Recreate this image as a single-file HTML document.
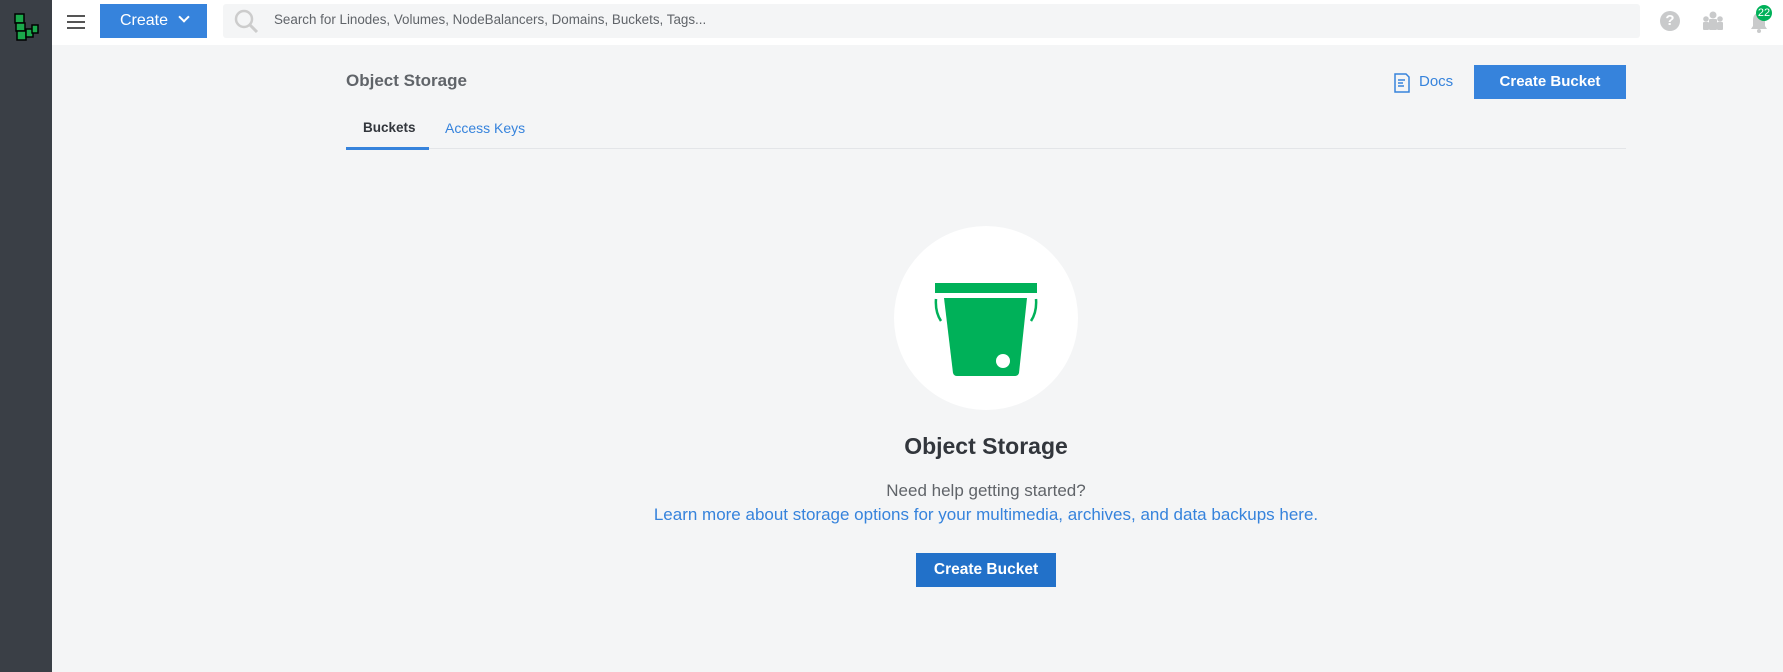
<!DOCTYPE html>
<html><head><style>
*{margin:0;padding:0;box-sizing:border-box}
body{width:1783px;height:672px;background:#f4f5f6;font-family:"Liberation Sans",sans-serif;position:relative;overflow:hidden}
.a{position:absolute}
</style></head><body>
<div class="a" style="left:0;top:0;width:52px;height:672px;background:#3a3f46"></div>
<svg class="a" style="left:12px;top:12px" width="28" height="32" viewBox="0 0 28 32">
<rect x="3" y="2" width="9" height="9" fill="#1ba84b" stroke="#000" stroke-width="1.5"/>
<rect x="4" y="11" width="9" height="8" fill="#1ba84b" stroke="#000" stroke-width="1.5"/>
<rect x="5" y="19" width="9" height="9" fill="#1ba84b" stroke="#000" stroke-width="1.5"/>
<rect x="14" y="17" width="7" height="8" fill="#1ba84b" stroke="#000" stroke-width="1.5"/>
<rect x="20" y="13" width="6" height="8" fill="#1ba84b" stroke="#000" stroke-width="1.5"/>
</svg>
<div class="a" style="left:52px;top:0;width:1731px;height:45px;background:#fff"></div>
<div class="a" style="left:67px;top:15px;width:18px;height:2px;background:#555;box-shadow:0 6px 0 #555,0 12px 0 #555"></div>
<div class="a" style="left:100px;top:4px;width:107px;height:34px;background:#3683dc;color:#fff;font-size:16px;line-height:34px;padding-left:20px">Create <span style="display:inline-block;width:8px;height:8px;border-right:2px solid #fff;border-bottom:2px solid #fff;transform:rotate(45deg);margin:0 0 4px 8px"></span></div>
<div class="a" style="left:223px;top:4px;width:1417px;height:34px;background:#f4f5f6;border-radius:3px"></div>
<svg class="a" style="left:233px;top:8px" width="26" height="26"><circle cx="11" cy="11" r="8" fill="none" stroke="#ccc" stroke-width="2.5"/><path d="M17 17l7 7" stroke="#ccc" stroke-width="3"/></svg>
<div class="a" style="left:274px;top:12px;font-size:13.4px;color:#606469">Search for Linodes, Volumes, NodeBalancers, Domains, Buckets, Tags...</div>
<div class="a" style="left:1660px;top:11px;width:20px;height:20px;border-radius:50%;background:#c9cacb;color:#fff;font-weight:bold;font-size:15px;text-align:center;line-height:20px">?</div>
<svg class="a" style="left:1702px;top:11px" width="22" height="20" fill="#c9cacb"><circle cx="11" cy="4" r="3.5"/><circle cx="4" cy="8" r="2.8"/><circle cx="18" cy="8" r="2.8"/><rect x="7" y="8" width="8" height="11" rx="1"/><rect x="1" y="11" width="6" height="8" rx="1"/><rect x="15" y="11" width="6" height="8" rx="1"/></svg>
<svg class="a" style="left:1748px;top:10px" width="22" height="24" fill="#c9cacb"><path d="M11 3c-4 0-6 3-6 7v6l-2 3h16l-2-3v-6c0-4-2-7-6-7z"/><circle cx="11" cy="21" r="2"/></svg>
<div class="a" style="left:1756px;top:5px;width:16px;height:16px;border-radius:50%;background:#00b159;color:#fff;font-size:11px;text-align:center;line-height:16px">22</div>

<div class="a" style="left:346px;top:71px;font-size:17px;font-weight:bold;color:#606469">Object Storage</div>
<svg class="a" style="left:1393px;top:73px" width="18" height="20"><path d="M2 1h11l3 3v15H2z" fill="none" stroke="#3683dc" stroke-width="1.5"/><path d="M5 7h7M5 10h5M5 13h6" stroke="#3683dc" stroke-width="1.5"/></svg>
<div class="a" style="left:1419px;top:73px;font-size:15px;color:#3683dc">Docs</div>
<div class="a" style="left:1474px;top:65px;width:152px;height:34px;background:#3683dc;color:#fff;font-size:15px;font-weight:bold;text-align:center;line-height:34px">Create Bucket</div>
<div class="a" style="left:363px;top:120px;font-size:13.5px;font-weight:bold;color:#32363c">Buckets</div>
<div class="a" style="left:445px;top:120px;font-size:14px;color:#3683dc">Access Keys</div>
<div class="a" style="left:346px;top:148px;width:1280px;height:1px;background:#e3e5e8"></div>
<div class="a" style="left:346px;top:147px;width:83px;height:3px;background:#3683dc"></div>

<div class="a" style="left:894px;top:226px;width:184px;height:184px;border-radius:50%;background:#fff"></div>
<svg class="a" style="left:920px;top:270px" width="130" height="120">
<rect x="15" y="13" width="102" height="10" fill="#00b159"/>
<path d="M24 28 L107 28 L99 103 Q98 106 95 106 L37 106 Q34 106 33 103 Z" fill="#00b159"/>
<path d="M16 29 Q15 42 21 51 M116 29 Q117 42 111 51" fill="none" stroke="#00b159" stroke-width="2.5"/>
<circle cx="83" cy="91" r="7" fill="#fff"/>
</svg>
<div class="a" style="left:0;width:1972px;top:433px;text-align:center;font-size:23px;font-weight:bold;color:#32363c">Object Storage</div>
<div class="a" style="left:0;width:1972px;top:481px;text-align:center;font-size:17px;color:#606469">Need help getting started?</div>
<div class="a" style="left:0;width:1972px;top:505px;text-align:center;font-size:17px;color:#3683dc">Learn more about storage options for your multimedia, archives, and data backups here.</div>
<div class="a" style="left:916px;top:553px;width:140px;height:34px;background:#2271c9;color:#fff;font-size:15.5px;font-weight:bold;text-align:center;line-height:34px">Create Bucket</div>
</body></html>
